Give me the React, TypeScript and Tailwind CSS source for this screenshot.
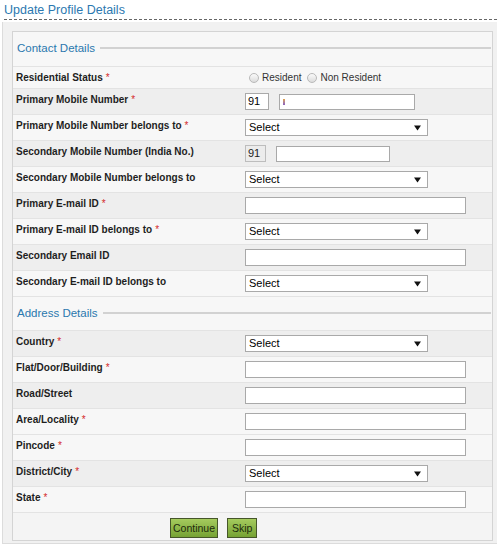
import React from 'react'

/* Update Profile Details — static form panel */

type Field =
  | { kind: 'radio' }
  | { kind: 'mobile'; code: string; disabled?: boolean; inputWidth: string; mark?: boolean }
  | { kind: 'select' }
  | { kind: 'text' }

interface Row {
  label: string
  required?: boolean
  field: Field
  dark?: boolean
}

const contactRows: Row[] = [
  { label: 'Residential Status', required: true, field: { kind: 'radio' } },
  { label: 'Primary Mobile Number', required: true, field: { kind: 'mobile', code: '91', inputWidth: 'w-[136px]', mark: true }, dark: true },
  { label: 'Primary Mobile Number belongs to', required: true, field: { kind: 'select' } },
  { label: 'Secondary Mobile Number (India No.)', field: { kind: 'mobile', code: '91', disabled: true, inputWidth: 'w-[114px]' }, dark: true },
  { label: 'Secondary Mobile Number belongs to', field: { kind: 'select' } },
  { label: 'Primary E-mail ID', required: true, field: { kind: 'text' }, dark: true },
  { label: 'Primary E-mail ID belongs to', required: true, field: { kind: 'select' } },
  { label: 'Secondary Email ID', field: { kind: 'text' }, dark: true },
  { label: 'Secondary E-mail ID belongs to', field: { kind: 'select' } },
]

const addressRows: Row[] = [
  { label: 'Country', required: true, field: { kind: 'select' }, dark: true },
  { label: 'Flat/Door/Building', required: true, field: { kind: 'text' } },
  { label: 'Road/Street', field: { kind: 'text' }, dark: true },
  { label: 'Area/Locality', required: true, field: { kind: 'text' } },
  { label: 'Pincode', required: true, field: { kind: 'text' } },
  { label: 'District/City', required: true, field: { kind: 'select' }, dark: true },
  { label: 'State', required: true, field: { kind: 'text' } },
]

function Radio({ label }: { label: string }) {
  return (
    <span className="flex items-center">
      <span className="w-[10px] h-[10px] rounded-full border border-[#b9b9b9] bg-gradient-to-b from-[#fafafa] to-[#dcdcdc]" />
      <span className="ml-[3px] text-[10px] leading-[12px] text-[#333]">{label}</span>
    </span>
  )
}

function SelectBox() {
  return (
    <div className="w-[183px] h-[17px] border border-[#a9a9a9] bg-white flex items-center justify-between pl-[3px] pr-[6px]">
      <span className="text-[11px] leading-[13px] text-black">Select</span>
      <svg width="7" height="6" viewBox="0 0 7 6">
        <path d="M0 0.5h7L3.5 5.5z" fill="#111" />
      </svg>
    </div>
  )
}

function FieldCell({ field }: { field: Field }) {
  if (field.kind === 'radio') {
    return (
      <div className="flex items-center gap-[6px] pl-[4px]">
        <Radio label="Resident" />
        <Radio label="Non Resident" />
      </div>
    )
  }
  if (field.kind === 'mobile') {
    return (
      <div className="flex items-center gap-[10px]">
        <div
          className={
            field.disabled
              ? 'w-[21px] h-[17px] border border-[#bdbdbd] bg-[#ececec] text-[11px] leading-[15px] pl-[2px] text-[#222]'
              : 'w-[24px] h-[17px] border border-[#a9a9a9] bg-white text-[11px] leading-[15px] pl-[2px] text-black'
          }
        >
          {field.code}
        </div>
        <div className={`${field.inputWidth} h-[16px] border border-[#a9a9a9] bg-white flex items-center pl-[3px]`}>
          {field.mark && <span className="w-[2px] h-[6px] bg-gradient-to-b from-[#e0a040] to-[#8a5cc0]" />}
        </div>
      </div>
    )
  }
  if (field.kind === 'select') return <SelectBox />
  return <div className="w-[221px] h-[17px] border border-[#a9a9a9] bg-white" />
}

function FormRow({ row, short }: { row: Row; short?: boolean }) {
  return (
    <div
      className={`flex border-t border-[#e3e3e3] ${short ? 'h-[22px]' : 'h-[26px]'} ${row.dark ? 'bg-[#eeeeee]' : 'bg-[#f7f7f7]'}`}
    >
      <div className="w-[232px] pl-[3px] pt-[5px] text-[10px] leading-[12px] font-bold text-[#1e1e1e]">
        {row.label}
        {row.required && <span className="ml-[3px] font-normal text-[#d42a2a]">*</span>}
      </div>
      <div className="flex items-center">
        <FieldCell field={row.field} />
      </div>
    </div>
  )
}

function Legend({ title, bordered }: { title: string; bordered?: boolean }) {
  return (
    <div className={`h-[34px] flex items-center pl-[4px] pr-[1px] pb-[2px] ${bordered ? 'border-t border-[#e3e3e3]' : ''}`}>
      <span className="text-[11.5px] leading-[14px] text-[#2a77ae]">{title}</span>
      <span className="flex-1 ml-[5px] h-[2px] bg-[#d2d2d2]" />
    </div>
  )
}

export default function App() {
  return (
    <div className="w-[497px] h-[548px] bg-white overflow-hidden" style={{ fontFamily: '"Liberation Sans", Arial, sans-serif' }}>
      <div className="pl-[4px] pt-[3px] h-[19px] text-[12.5px] leading-[14px] text-[#2b78b0]">Update Profile Details</div>
      <div className="ml-[4px] border-t border-dashed border-[#666]" />
      <div className="mt-[2px] ml-[2px] border-l border-b border-[#dcdcdc] bg-[#f1f1f1] pl-[9px] pt-[9px] pr-[4px] pb-[2px]">
        <div className="border border-[#d4d4d4] bg-[#f7f7f7]">
          <Legend title="Contact Details" />
          {contactRows.map((row, i) => (
            <FormRow key={row.label} row={row} short={i === 0} />
          ))}
          <Legend title="Address Details" bordered />
          {addressRows.map((row) => (
            <FormRow key={row.label} row={row} />
          ))}
          <div className="h-[28px] border-t border-[#e3e3e3] bg-[#f4f4f4] flex items-start pt-[5px] pl-[157px] gap-[9px]">
            <button className="h-[20px] px-[2px] border border-[#46562a] bg-gradient-to-b from-[#a5cb5e] to-[#76a233] text-[10.5px] leading-[14px] text-[#1d2a0c]">
              Continue
            </button>
            <button className="h-[20px] px-[4px] border border-[#46562a] bg-gradient-to-b from-[#a5cb5e] to-[#76a233] text-[10.5px] leading-[14px] text-[#1d2a0c]">
              Skip
            </button>
          </div>
        </div>
      </div>
    </div>
  )
}
